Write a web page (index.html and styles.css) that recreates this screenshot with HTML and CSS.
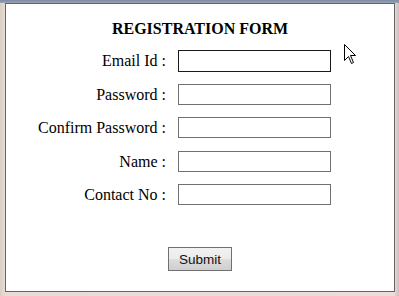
FILE: index.html
```html
<!DOCTYPE html>
<html>
<head>
<meta charset="utf-8">
<link rel="stylesheet" href="styles.css">
</head>
<body>
<div class="box">
  <h1 class="title">REGISTRATION FORM</h1>
  <form class="form">
    <label class="lbl">Email Id :</label><input class="inp focused" type="text">
    <label class="lbl">Password :</label><input class="inp" type="password">
    <label class="lbl">Confirm Password :</label><input class="inp" type="password">
    <label class="lbl">Name :</label><input class="inp" type="text">
    <label class="lbl">Contact No :</label><input class="inp" type="text">
  </form>
  <div class="actions"><button class="btn" type="button">Submit</button></div>
</div>
<svg class="cursor" width="14" height="22" viewBox="0 0 14 22"><path d="M0.5 0.5 L0.5 16.5 L4.5 12.5 L7.5 19.5 L9.5 18.5 L6.5 11.5 L11.5 11.5 Z" fill="#fff" stroke="#000" stroke-width="1" stroke-linejoin="miter"/></svg>
</body>
</html>
```
FILE: styles.css
```css
html, body { margin: 0; padding: 0; }
body {
  width: 399px;
  height: 296px;
  overflow: hidden;
  position: relative;
  background:
    linear-gradient(180deg, #7d8aa3 0px, #9aa3b4 3px, rgba(0,0,0,0) 3px),
    linear-gradient(90deg, #d8cfc4 0px, #e9dcd6 5px, #eddcd8 394px, #c9bfc0 399px);
  background-color: #eedcd8;
  font-family: "Liberation Serif", "Times New Roman", serif;
}
.box {
  box-sizing: border-box;
  margin: 3px 0 0 5px;
  width: 390px;
  height: 289px;
  background: #fff;
  border: 1px solid #666;
  padding-top: 16px;
  display: flex;
  flex-direction: column;
  align-items: center;
}
.title {
  margin: 0;
  font-size: 16px;
  line-height: 18px;
  font-weight: bold;
  color: #000;
}
.form {
  margin-top: 12px;
  align-self: stretch;
  display: grid;
  grid-template-columns: 160px 153px;
  column-gap: 12px;
  row-gap: 12.5px;
}
.lbl {
  text-align: right;
  font-size: 16px;
  line-height: 21px;
  color: #000;
}
.inp {
  box-sizing: border-box;
  width: 153px;
  height: 21px;
  margin: 0;
  border: 1px solid #707070;
  background: #fff;
  padding: 0 2px;
  outline: none;
}
.inp.focused { border-color: #1a1a1a; height: 22px; margin-bottom: -1px; }
.actions {
  margin-top: 42px;
  display: flex;
  justify-content: center;
}
.btn {
  box-sizing: border-box;
  width: 64px;
  height: 24px;
  margin: 0;
  padding: 0;
  border: 1px solid #707070;
  border-radius: 0;
  background: linear-gradient(180deg, #f2f2f2 0%, #ebebeb 50%, #dddddd 51%, #cfcfcf 100%);
  font-family: "Liberation Sans", Arial, sans-serif;
  font-size: 13.5px;
  color: #111;
}
.cursor {
  position: absolute;
  left: 344px;
  top: 44px;
}
```
